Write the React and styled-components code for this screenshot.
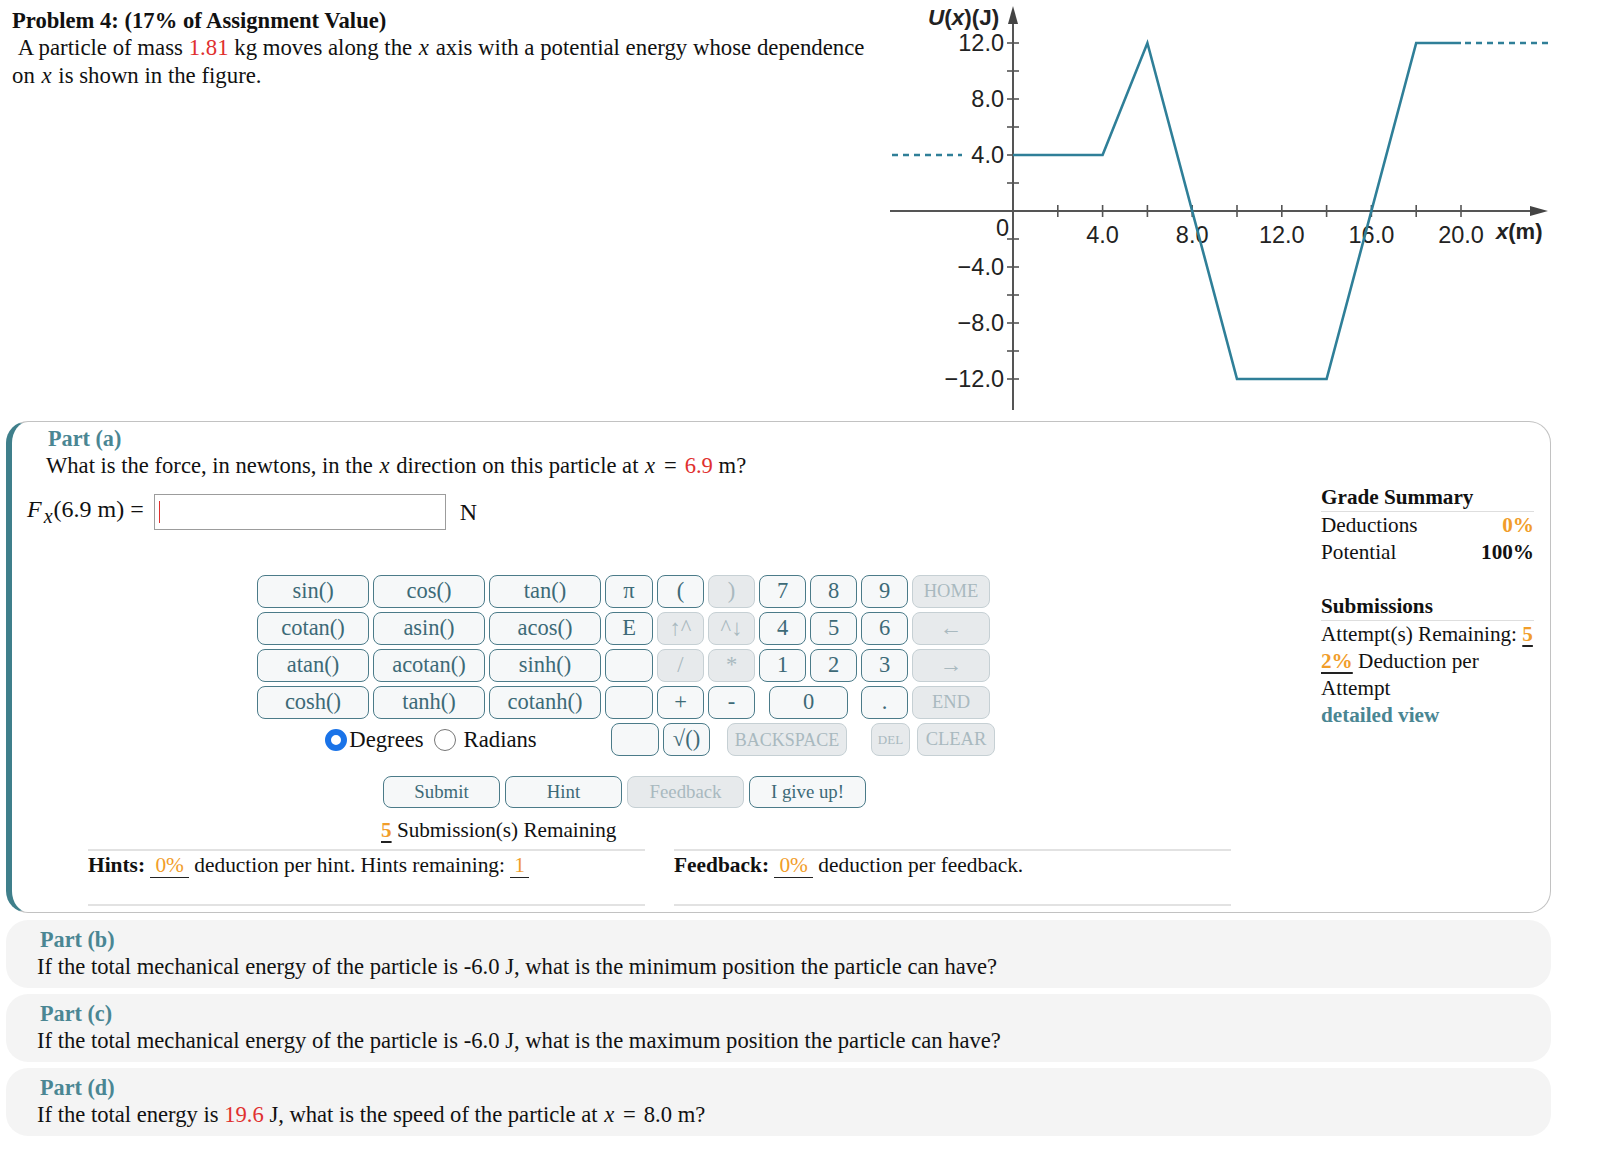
import React from "react";
import styled, { createGlobalStyle } from "styled-components";

const TEAL = "#3f7f8b";
const HEAD = "#4a8693";
const ORANGE = "#f19d2a";
const RED = "#e0302f";

const GlobalStyle = createGlobalStyle`
  body {
    margin: 0;
    background: #fff;
    font-family: "Liberation Serif", "Times New Roman", serif;
    color: #111;
  }
`;

const Page = styled.div`
  width: 1605px;
`;

const Top = styled.section`
  display: flex;
  height: 421px;
`;

const Intro = styled.div`
  width: 878px;
  padding: 8px 0 0 12px;
`;

const Title = styled.h1`
  margin: 0;
  font-size: 22.6px;
  line-height: 26px;
  font-weight: bold;
`;

const Para = styled.p`
  margin: 0;
  font-size: 22.8px;
  line-height: 28px;
`;

const Red = styled.span`
  color: ${RED};
`;

const M = styled.i`
  font-family: "Liberation Serif", serif;
  margin: 0 1px;
`;

const Eq = styled.span`
  margin: 0 0.35em;
`;

const ChartSvg = styled.svg`
  display: block;
  flex: none;
`;

const PartBox = styled.section`
  box-sizing: border-box;
  margin-left: 6px;
  width: 1545px;
  height: 492px;
  border: 1.5px solid #c2c2c2;
  border-left: 6px solid ${TEAL};
  border-radius: 22px;
  display: flex;
`;

const Main = styled.div`
  flex: 1;
  display: flex;
  flex-direction: column;
`;

const PartTitle = styled.h2`
  margin: ${(p) => p.$m || "0"};
  font-size: 22.2px;
  line-height: 26px;
  font-weight: bold;
  color: ${HEAD};
`;

const Question = styled.p`
  margin: ${(p) => p.$m || "0"};
  font-size: 22.6px;
  line-height: 28px;
`;

const AnswerRow = styled.div`
  display: flex;
  align-items: center;
  margin: 14px 0 0 14px;
  height: 36px;
  font-size: 24px;
`;

const InputBox = styled.div`
  box-sizing: border-box;
  width: 292px;
  height: 36px;
  margin: 0 14px 0 10px;
  border: 1.5px solid #9c9c9c;
  display: flex;
  align-items: center;
  padding-left: 4px;
`;

const Caret = styled.span`
  width: 1.5px;
  height: 22px;
  background: ${RED};
`;

const Keypad = styled.div`
  margin: 45px 0 0 245px;
  display: flex;
  flex-direction: column;
  gap: 4px;
`;

const KeyRow = styled.div`
  display: flex;
  gap: 4px;
  align-items: center;
`;

const Key = styled.button`
  box-sizing: border-box;
  width: ${(p) => p.$w || 47}px;
  height: ${(p) => p.$h || 33}px;
  margin-left: ${(p) => p.$ml || 0}px;
  padding: 0;
  border: 1.5px solid ${(p) => (p.disabled ? "#c6d0d4" : "#4b7b89")};
  border-radius: 8px;
  background: ${(p) => (p.disabled ? "#e7eaec" : "#f6f8f9")};
  color: ${(p) => (p.disabled ? "#a9b9bf" : "#3d6a77")};
  font-family: "Liberation Serif", serif;
  font-size: ${(p) => p.$fs || 22.5}px;
  line-height: 1;
  white-space: nowrap;
  overflow: hidden;
  flex: none;
`;

const AngleGroup = styled.div`
  width: 348px;
  display: flex;
  justify-content: center;
  align-items: center;
  font-size: 22.7px;
`;

const Radio = styled.span`
  box-sizing: border-box;
  width: 22px;
  height: 22px;
  border-radius: 50%;
  margin: ${(p) => p.$m};
  border: ${(p) => (p.$on ? "6px solid #1a73e8" : "1.5px solid #767676")};
  background: #fff;
`;

const Actions = styled.div`
  margin: 20px 0 0 371px;
  display: flex;
  gap: 5px;
`;

const Remaining = styled.div`
  margin: 9px 0 0 369px;
  font-size: 21.2px;
  line-height: 26px;
`;

const Num = styled.span`
  color: ${ORANGE};
  font-weight: ${(p) => (p.$bold ? "bold" : "normal")};
  border-bottom: 1.5px solid #222;
  padding: ${(p) => p.$pad || "0"};
`;

const Under = styled.span`
  color: ${ORANGE};
  font-weight: bold;
  text-decoration: underline;
  text-decoration-color: #222;
  text-decoration-thickness: 1.5px;
  text-underline-offset: 4px;
`;

const InfoRow = styled.div`
  margin: 6px 0 0 76px;
  display: flex;
  gap: 29px;
`;

const InfoCol = styled.div`
  width: 557px;
  height: 52px;
  border-top: 2px solid #e2e2e2;
  border-bottom: 2px solid #e2e2e2;
  font-size: 21.4px;
  line-height: 26px;
  padding-top: 1px;
`;

const Side = styled.aside`
  width: 213px;
  margin-right: 16px;
  padding-top: 62px;
  font-size: 21.2px;
  line-height: 27px;
`;

const SideHead = styled.div`
  font-weight: bold;
  border-bottom: 1.5px solid #dedede;
  margin-top: ${(p) => p.$mt || 0}px;
`;

const SideRow = styled.div`
  display: flex;
  justify-content: space-between;
`;

const SideLine = styled.div`
  white-space: nowrap;
`;

const Strong = styled.b`
  color: ${(p) => p.$c || "#111"};
`;

const DetailLink = styled.a`
  font-weight: bold;
  color: ${HEAD};
  text-decoration: none;
`;

const Collapsed = styled.section`
  box-sizing: border-box;
  margin: ${(p) => p.$mt}px 0 0 6px;
  width: 1545px;
  border-radius: 22px;
  background: #f4f4f4;
  padding: 7px 0 7px 0;
`;

/* ---------- chart ---------- */
const X0 = 123;
const Y0 = 211;
const sx = (m) => X0 + m * 22.4;
const sy = (j) => Y0 - j * 14;

function Chart() {
  const pts = [
    [0, 4],
    [4, 4],
    [6, 12],
    [10, -12],
    [14, -12],
    [18, 12],
    [20, 12],
  ]
    .map(([m, j]) => `${sx(m)},${sy(j)}`)
    .join(" ");
  const yTicks = [];
  for (let j = -12; j <= 12; j += 2) if (j !== 0) yTicks.push(j);
  const xTicks = [];
  for (let m = 2; m <= 20; m += 2) xTicks.push(m);
  const yLabels = [12, 8, 4, -4, -8, -12];
  const xLabels = [4, 8, 12, 16, 20];
  const font = { fontFamily: "Liberation Sans, Arial, sans-serif", fontSize: 23.5, fill: "#222" };
  return (
    <ChartSvg width="715" height="412" viewBox="0 0 715 412">
      <line x1="0" y1={Y0} x2="650" y2={Y0} stroke="#555" strokeWidth="2" />
      <polygon points={`658,${Y0} 640,${Y0 - 5} 640,${Y0 + 5}`} fill="#444" />
      <line x1={X0} y1="16" x2={X0} y2="410" stroke="#555" strokeWidth="2" />
      <polygon points={`${X0},6 ${X0 - 5},24 ${X0 + 5},24`} fill="#444" />
      {yTicks.map((j) => (
        <line key={j} x1={X0 - 6} y1={sy(j)} x2={X0 + 6} y2={sy(j)} stroke="#555" strokeWidth="1.6" />
      ))}
      {xTicks.map((m) => (
        <line key={m} x1={sx(m)} y1={Y0 - 6} x2={sx(m)} y2={Y0 + 6} stroke="#555" strokeWidth="1.6" />
      ))}
      {yLabels.map((j) => (
        <text key={j} x={X0 - 9} y={sy(j) + 8} textAnchor="end" {...font}>
          {j < 0 ? `\u2212${Math.abs(j).toFixed(1)}` : j.toFixed(1)}
        </text>
      ))}
      <text x={X0 - 4} y={Y0 + 25} textAnchor="end" {...font}>0</text>
      {xLabels.map((m) => (
        <text key={m} x={sx(m)} y={Y0 + 32} textAnchor="middle" {...font}>
          {m.toFixed(1)}
        </text>
      ))}
      <text x="606" y={Y0 + 28} {...font} fontSize="22" fontWeight="bold">
        <tspan fontStyle="italic">x</tspan>(m)
      </text>
      <text x="38" y="25" {...font} fontSize="22.5" fontWeight="bold">
        <tspan fontStyle="italic">U</tspan>(<tspan fontStyle="italic">x</tspan>)(J)
      </text>
      <line x1="2" y1={sy(4)} x2="72" y2={sy(4)} stroke="#2f7f98" strokeWidth="2.5" strokeDasharray="6 5" />
      <line x1={sx(20) + 4} y1={sy(12)} x2="660" y2={sy(12)} stroke="#2f7f98" strokeWidth="2.5" strokeDasharray="6 5" />
      <polyline points={pts} fill="none" stroke="#2f7f98" strokeWidth="2.6" strokeLinejoin="miter" />
    </ChartSvg>
  );
}

const rows = [
  [
    { t: "sin()", w: 112 },
    { t: "cos()", w: 112 },
    { t: "tan()", w: 112 },
    { t: "\u03c0", w: 48 },
    { t: "(" },
    { t: ")", off: true },
    { t: "7" },
    { t: "8" },
    { t: "9" },
    { t: "HOME", w: 78, off: true, fs: 18.5 },
  ],
  [
    { t: "cotan()", w: 112 },
    { t: "asin()", w: 112 },
    { t: "acos()", w: 112 },
    { t: "E", w: 48 },
    { t: "\u2191^", off: true },
    { t: "^\u2193", off: true },
    { t: "4" },
    { t: "5" },
    { t: "6" },
    { t: "\u2190", w: 78, off: true },
  ],
  [
    { t: "atan()", w: 112 },
    { t: "acotan()", w: 112 },
    { t: "sinh()", w: 112 },
    { t: "", w: 48 },
    { t: "/", off: true },
    { t: "*", off: true },
    { t: "1" },
    { t: "2" },
    { t: "3" },
    { t: "\u2192", w: 78, off: true },
  ],
  [
    { t: "cosh()", w: 112 },
    { t: "tanh()", w: 112 },
    { t: "cotanh()", w: 112 },
    { t: "", w: 48 },
    { t: "+" },
    { t: "-" },
    { t: "0", w: 79, ml: 10 },
    { t: ".", ml: 9 },
    { t: "END", w: 78, off: true, fs: 18.5 },
  ],
];

const lastRow = [
  { t: "", w: 48, ml: 2 },
  { t: "\u221a()" },
  { t: "BACKSPACE", w: 120, ml: 13, off: true, fs: 18 },
  { t: "DEL", w: 39, ml: 20, off: true, fs: 13 },
  { t: "CLEAR", w: 78, ml: 3, off: true, fs: 18.5 },
];

function renderKey(k, i) {
  return (
    <Key key={i} $w={k.w} $ml={k.ml} $fs={k.fs} disabled={k.off}>
      {k.t}
    </Key>
  );
}

const collapsed = [
  {
    name: "b",
    text: "If the total mechanical energy of the particle is -6.0 J, what is the minimum position the particle can have?",
  },
  {
    name: "c",
    text: "If the total mechanical energy of the particle is -6.0 J, what is the maximum position the particle can have?",
  },
];

export default function App() {
  return (
    <Page>
      <GlobalStyle />
      <Top>
        <Intro>
          <Title>Problem 4: (17% of Assignment Value)</Title>
          <Para>
            &nbsp;A particle of mass <Red>1.81</Red> kg moves along the <M>x</M> axis with a potential energy whose dependence
            <br />
            on <M>x</M> is shown in the figure.
          </Para>
        </Intro>
        <Chart />
      </Top>

      <PartBox>
        <Main>
          <PartTitle $m="4px 0 0 36px">Part (a)</PartTitle>
          <Question $m="0 0 0 34px">
            What is the force, in newtons, in the <M>x</M> direction on this particle at <M>x</M>
            <Eq>=</Eq>
            <Red>6.9</Red> m?
          </Question>
          <AnswerRow>
            <span>
              <M>F</M>
              <sub>
                <M>x</M>
              </sub>
              (6.9 m) =
            </span>
            <InputBox>
              <Caret />
            </InputBox>
            N
          </AnswerRow>

          <Keypad>
            {rows.map((r, ri) => (
              <KeyRow key={ri}>{r.map(renderKey)}</KeyRow>
            ))}
            <KeyRow>
              <AngleGroup>
                <Radio $on $m="0 2px 0 0" />
                Degrees
                <Radio $m="0 8px 0 10px" />
                Radians
              </AngleGroup>
              {lastRow.map(renderKey)}
            </KeyRow>
          </Keypad>

          <Actions>
            <Key $w={117} $h={32} $fs={18.8}>Submit</Key>
            <Key $w={117} $h={32} $fs={18.8}>Hint</Key>
            <Key $w={117} $h={32} $fs={18.8} disabled>Feedback</Key>
            <Key $w={117} $h={32} $fs={18.8}>I give up!</Key>
          </Actions>

          <Remaining>
            <Under>5</Under> Submission(s) Remaining
          </Remaining>

          <InfoRow>
            <InfoCol>
              <b>Hints:</b> <Num $pad="0 5px">0%</Num> deduction per hint. Hints remaining: <Num $pad="0 4px">1</Num>
            </InfoCol>
            <InfoCol>
              <b>Feedback:</b> <Num $pad="0 5px">0%</Num> deduction per feedback.
            </InfoCol>
          </InfoRow>
        </Main>

        <Side>
          <SideHead>Grade Summary</SideHead>
          <SideRow>
            <span>Deductions</span>
            <Strong $c={ORANGE}>0%</Strong>
          </SideRow>
          <SideRow>
            <span>Potential</span>
            <Strong>100%</Strong>
          </SideRow>
          <SideHead $mt={27}>Submissions</SideHead>
          <SideLine>
            Attempt(s) Remaining: <Under>5</Under>
          </SideLine>
          <SideLine>
            <Under>2%</Under> Deduction per
          </SideLine>
          <SideLine>Attempt</SideLine>
          <DetailLink href="#">detailed view</DetailLink>
        </Side>
      </PartBox>

      {collapsed.map((p, i) => (
        <Collapsed key={p.name} $mt={i === 0 ? 7 : 6}>
          <PartTitle $m="0 0 0 34px">Part ({p.name})</PartTitle>
          <Question $m="0 0 0 31px">{p.text}</Question>
        </Collapsed>
      ))}
      <Collapsed $mt={6}>
        <PartTitle $m="0 0 0 34px">Part (d)</PartTitle>
        <Question $m="0 0 0 31px">
          If the total energy is <Red>19.6</Red> J, what is the speed of the particle at <M>x</M>
          <Eq>=</Eq>8.0 m?
        </Question>
      </Collapsed>
    </Page>
  );
}
